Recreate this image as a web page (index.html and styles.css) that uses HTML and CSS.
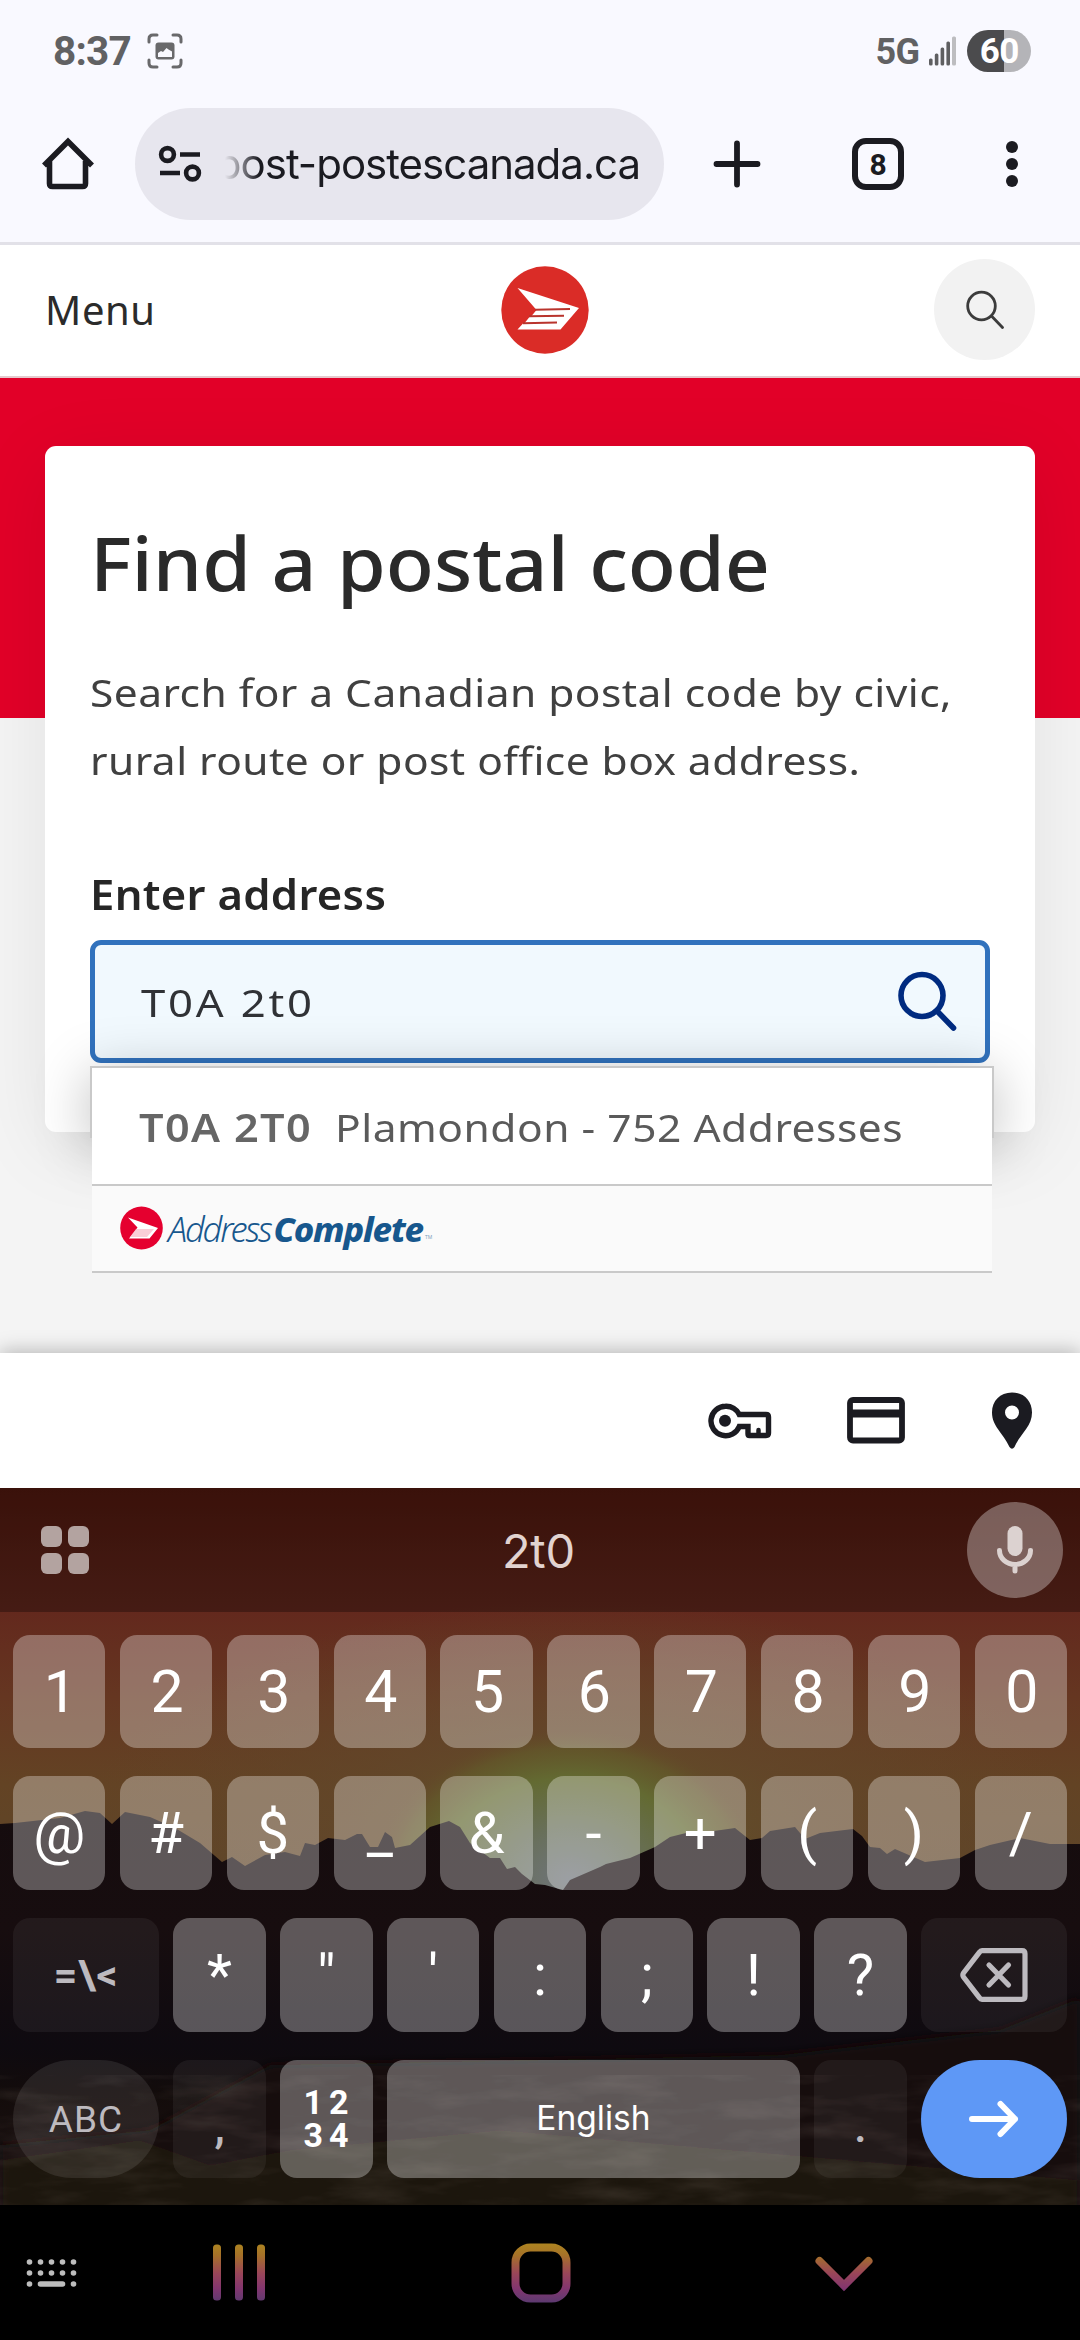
FILE: index.html
```html
<!DOCTYPE html>
<html lang="en">
<head>
<meta charset="utf-8">
<title>Find a postal code</title>
<link rel="stylesheet" href="styles.css">
</head>
<body>
<div class="status">
  <span class="clock">8:37</span>
  <svg class="shot" width="36" height="36" viewBox="0 0 36 36"><path d="M2 9V6q0-4 4-4h4M26 2h4q4 0 4 4v3M34 27v3q0 4-4 4h-4M10 34H6q-4 0-4-4v-3" fill="none" stroke="#69696b" stroke-width="3" stroke-linecap="round"/><rect x="8.500" y="9.500" width="19" height="17" rx="3" fill="#69696b"/><path d="M11 24v-4l3-2 2 1 3.500-4 2 1.500 3.500 2V24z" fill="#f9f9ff"/></svg>
  <span class="net">5G</span>
  <svg class="signal" width="28" height="30" viewBox="0 0 28 30"><g fill="#5f5f61"><rect x="0" y="22.500" width="3.600" height="7" rx="1.500"/><rect x="5.800" y="17.500" width="3.600" height="12" rx="1.500"/><rect x="11.600" y="11.500" width="3.600" height="18" rx="1.500"/><rect x="17.400" y="5.500" width="3.600" height="24" rx="1.500"/></g><rect x="23" y="0.500" width="4" height="29" rx="1.500" fill="#bdbdc0"/></svg>
  <span class="battery">60</span>
</div>
<div class="toolbar">
  <svg class="home" width="54" height="54" viewBox="0 0 54 54"><path d="M8.500 24v22.500q0 3 3 3h30q3 0 3-3V24M3 28.500 27 4.500l24 24" fill="none" stroke="#1b1b21" stroke-width="5.600"/></svg>
  <div class="pill">
    <svg width="44" height="38" viewBox="0 0 44 38"><g fill="none" stroke="#1b1b21" stroke-width="4.600"><circle cx="9.500" cy="9.500" r="6.400"/><circle cx="34.500" cy="28" r="6.400"/><path d="M22 9.500h20M2 28h20"/></g></svg>
    <div class="url"><span>post-postescanada.ca</span></div>
  </div>
  <svg class="plus" width="48" height="48" viewBox="0 0 48 48"><path d="M24 3.500v41M3.500 24h41" stroke="#1b1b21" stroke-width="5.800" stroke-linecap="round"/></svg>
  <span class="tabs">8</span>
  <svg class="dots" width="14" height="50" viewBox="0 0 14 50"><g fill="#1b1b21"><circle cx="7" cy="8" r="6"/><circle cx="7" cy="25" r="6"/><circle cx="7" cy="42" r="6"/></g></svg>
</div>
<header class="site">
  <span class="menu">Menu</span>
  <svg class="logo" width="88" height="88" viewBox="0 0 88 88"><circle cx="44" cy="44" r="43.700" fill="#da2c27"/><path d="M16.500 22 78 42 59.500 63.500H16.500L22 57.500h3l-1-1 4.500-5.500h3l-1-1 5-6z" fill="#fff"/><path d="M34 43.800 69 43M28 50.300 63 49.700M22 57.200 56 56.500" stroke="#b9342d" stroke-width="1.900"/></svg>
  <span class="find"><svg width="38" height="40" viewBox="0 0 38 40"><circle cx="15.500" cy="16" r="13.800" fill="none" stroke="#3c3c3c" stroke-width="2.800"/><path d="m25.500 26 11 11.500" stroke="#3c3c3c" stroke-width="2.800" stroke-linecap="round"/></svg></span>
</header>
<main class="hero">
  <section class="card">
    <h1>Find a postal code</h1>
    <p>Search for a Canadian postal code by civic,<br>rural route or post office box address.</p>
    <div class="label">Enter address</div>
    <div class="field">
      <span class="value">T0A 2t0</span>
      <svg width="62" height="62" viewBox="0 0 62 62"><circle cx="25" cy="24.500" r="21" fill="none" stroke="#002b80" stroke-width="5.600"/><path d="m41 41 15.500 16" stroke="#002b80" stroke-width="5.600" stroke-linecap="round"/></svg>
      <div class="drop">
        <div class="option"><b>T0A 2T0</b><span>Plamondon - 752 Addresses</span></div>
        <div class="brand">
          <svg width="43" height="44" viewBox="0 0 43 44"><ellipse cx="21.500" cy="22" rx="21.300" ry="21.500" fill="#e5002f"/><path d="m8 11.500 30 10.500L29.500 32.500H9l8.500-11z" fill="#fff"/><path d="M16 23h18l-7 8H10z" fill="#f7b9c6" opacity=".7"/></svg>
          <i>Address</i><em>Complete</em><small>TM</small>
        </div>
      </div>
    </div>
  </section>
</main>
<div class="fill">
  <svg width="64" height="36" viewBox="0 0 64 36"><path d="M17.500 3.300a14.700 14.700 0 1 0 13.800 20.200H40V31q0 1.500 1.500 1.500H58q2.500 0 2.500-2.500V14q0-2.500-2.500-2.500H31.300A14.700 14.700 0 0 0 17.500 3.300z" fill="none" stroke="#1b1b21" stroke-width="5.400"/><circle cx="17" cy="17.800" r="6" fill="#1b1b21"/><path d="M50.500 32v-5" stroke="#1b1b21" stroke-width="4.500" stroke-linecap="round"/></svg>
  <svg class="cc" width="58" height="47" viewBox="0 0 58 47"><rect x="3" y="3" width="52" height="40.500" rx="3" fill="none" stroke="#1b1b21" stroke-width="5.800"/><path d="M3 16.500h52" stroke="#1b1b21" stroke-width="8"/></svg>
  <svg class="pin" width="42" height="58" viewBox="0 0 42 58"><path d="M21 .5C9 .5 1 9 1 20.500c0 14 11 20 17.500 34.500q2.500 3.500 5 0C30 40.500 41 34.500 41 20.500 41 9 33 .5 21 .5zm0 13a7 7 0 1 1 0 14 7 7 0 0 1 0-14z" fill="#1b1b21"/></svg>
</div>
<section class="keyboard">
  <svg class="scene" width="1080" height="717" viewBox="0 1488 1080 717" preserveAspectRatio="none">
    <defs>
      <linearGradient id="sky" x1="0" y1="0" x2="0" y2="1"><stop offset="0" stop-color="#54190f"/><stop offset=".3" stop-color="#63281d"/><stop offset=".52" stop-color="#653621"/><stop offset=".74" stop-color="#634324"/><stop offset="1" stop-color="#5d462a"/></linearGradient>
      <radialGradient id="mid"><stop offset="0" stop-color="#63572a"/><stop offset=".45" stop-color="#62472a" stop-opacity=".75"/><stop offset="1" stop-color="#624428" stop-opacity="0"/></radialGradient>
      <radialGradient id="glow"><stop offset="0" stop-color="#6f747b"/><stop offset=".3" stop-color="#69705f"/><stop offset=".68" stop-color="#636a32"/><stop offset=".88" stop-color="#62592a" stop-opacity=".7"/><stop offset="1" stop-color="#624a28" stop-opacity="0"/></radialGradient>
      <linearGradient id="land" x1="0" y1="0" x2="0" y2="1"><stop offset="0" stop-color="#150c0e"/><stop offset=".3" stop-color="#170d0f"/><stop offset=".6" stop-color="#0e0a10"/><stop offset=".72" stop-color="#130c0b"/><stop offset="1" stop-color="#1d1213"/></linearGradient>
      <filter id="soft"><feGaussianBlur stdDeviation="5"/></filter>
      <filter id="grain" x="0" y="0" width="1" height="1"><feTurbulence type="fractalNoise" baseFrequency=".012 .05" numOctaves="4" seed="4"/><feColorMatrix values="0 0 0 0 .42  0 0 0 0 .33  0 0 0 0 .28  1.600 0 0 0 -.7"/></filter>
    </defs>
    <rect y="1488" width="1080" height="400" fill="url(#sky)"/>
    <ellipse cx="580" cy="1830" rx="500" ry="230" fill="url(#mid)"/>
    <ellipse cx="570" cy="1880" rx="195" ry="150" fill="url(#glow)"/>
    <path d="M0 1824 15 1823 60 1818 85 1811 100 1813 112 1824 125 1812 150 1817 175 1828 200 1843 222 1862 232 1857 245 1866 265 1855 285 1852 300 1856 305 1843 315 1845 328 1838 345 1840 357 1834 362 1834 370 1847 378 1847 385 1832 392 1837 395 1848 410 1845 430 1827 449 1821 460 1827 470 1843 490 1858 500 1858 507 1869 515 1867 522 1874 535 1884 545 1885 563 1890 570 1880 600 1867 606 1864 630 1858 655 1847 670 1837 690 1832 700 1833 735 1828 750 1840 762 1838 770 1831 795 1827 805 1839 820 1833 853 1829 862 1836 870 1847 880 1848 887 1854 895 1849 925 1862 960 1858 975 1850 990 1845 1020 1838 1050 1844 1080 1844V2205H0z" fill="url(#land)"/>
    <g filter="url(#soft)"><path d="M0 2145 150 2130 270 2065 540 2060 780 2055 1000 2030 1080 1998V2215H0z" fill="#150c07"/><path d="M0 2160 140 2140 210 2165 290 2150 500 2130 1080 2180V2215H0z" fill="#1e1211"/></g>
    <rect y="2075" width="1080" height="130" filter="url(#grain)" opacity=".18"/>
  </svg>
  <div class="strip">
    <svg class="apps" width="48" height="48" viewBox="0 0 48 48"><g fill="#b3a3a0"><rect width="21" height="21" rx="6"/><rect x="27" width="21" height="21" rx="6"/><rect y="27" width="21" height="21" rx="6"/><rect x="27" y="27" width="21" height="21" rx="6"/></g></svg>
    <span class="sugg">2t0</span>
    <span class="mic"><svg width="36" height="50" viewBox="0 0 36 50"><rect x="10.500" y="1" width="15" height="30" rx="7.500" fill="#dcd2d0"/><path d="M2.500 25.500a15.500 14 0 0 0 31 0M18 39.500V46" fill="none" stroke="#dcd2d0" stroke-width="5" stroke-linecap="round"/></svg></span>
  </div>
  <div class="keys">
    <div class="row r1"><kbd>1</kbd><kbd>2</kbd><kbd>3</kbd><kbd>4</kbd><kbd>5</kbd><kbd>6</kbd><kbd>7</kbd><kbd>8</kbd><kbd>9</kbd><kbd>0</kbd></div>
    <div class="row r2"><kbd>@</kbd><kbd>#</kbd><kbd>$</kbd><kbd>_</kbd><kbd>&amp;</kbd><kbd>-</kbd><kbd>+</kbd><kbd>(</kbd><kbd>)</kbd><kbd>/</kbd></div>
    <div class="row r3"><kbd class="dim sym">=\&lt;</kbd><kbd>*</kbd><kbd>"</kbd><kbd>'</kbd><kbd>:</kbd><kbd>;</kbd><kbd>!</kbd><kbd>?</kbd><kbd class="dim"><svg width="68" height="54" viewBox="0 0 68 54"><path d="M22 2.700h40q3 0 3 3v42.600q0 3-3 3H22q-1.500 0-2.500-1.500L3.500 29q-1.300-2 0-4L19.500 4.200q1-1.500 2.500-1.500z" fill="none" stroke="#bdbabf" stroke-width="5.200"/><path d="m29 17 19.500 20M48.500 17 29 37" stroke="#bdbabf" stroke-width="5.200" stroke-linecap="round"/></svg></kbd></div>
    <div class="row r4"><kbd class="dim abc">ABC</kbd><kbd class="dim punct">,</kbd><kbd class="num"><span>12</span><span>34</span></kbd><kbd class="space">English</kbd><kbd class="dim punct">.</kbd><kbd class="enter"><svg width="50" height="38" viewBox="0 0 50 38"><path d="M3 19h43M31.500 4 46 19 31.500 34" fill="none" stroke="#fff" stroke-width="6" stroke-linecap="round" stroke-linejoin="round"/></svg></kbd></div>
  </div>
</section>
<nav class="nav">
  <svg width="52" height="30" viewBox="0 0 52 30"><g fill="none" stroke="#bdbdbd" stroke-width="5.600" stroke-linecap="round"><path d="M3.500 4h.01M14.500 4h.01M25.500 4h.01M36.500 4h.01M47.500 4h.01M3.500 15h.01M14.500 15h.01M25.500 15h.01M36.500 15h.01M47.500 15h.01M3.500 26h.01M47.500 26h.01M14.500 26h22"/></g></svg>
  <svg class="recents" width="54" height="60" viewBox="0 0 54 60"><defs><linearGradient id="dusk" gradientUnits="userSpaceOnUse" x1="0" y1="0" x2="0" y2="60"><stop offset="0" stop-color="#ad8520"/><stop offset=".2" stop-color="#a67228"/><stop offset=".5" stop-color="#9a4658"/><stop offset=".75" stop-color="#83366f"/><stop offset="1" stop-color="#5b3a70"/></linearGradient></defs><g fill="url(#dusk)"><rect x="1" y="1.500" width="8" height="56" rx="3.500"/><rect x="23" y="1.500" width="8" height="56" rx="3.500"/><rect x="45" y="1.500" width="8" height="56" rx="3.500"/></g></svg>
  <svg class="homekey" width="60" height="60" viewBox="0 0 60 60"><rect x="4.500" y="4.500" width="51" height="51" rx="15" fill="none" stroke="url(#dusk)" stroke-width="8"/></svg>
  <svg class="down" width="58" height="60" viewBox="0 0 58 60"><path d="M4.500 18 29 42.500 53.500 18" fill="none" stroke="url(#dusk)" stroke-width="8" stroke-linecap="round"/></svg>
</nav>
</body>
</html>
```
FILE: styles.css
```css
*{box-sizing:border-box}
body{margin:0;width:1080px;height:2340px;overflow:hidden;background:#f3f3f3;font-family:"Noto Sans",sans-serif}
svg{display:block;flex:none}

.status{display:flex;align-items:center;height:102px;padding:0 49px 0 53px;background:#f9f9ff;font-family:Roboto,sans-serif;font-weight:700;color:#616163}
.clock{width:94px;font-size:40.500px;letter-spacing:-.8px}
.net{margin-left:693px;width:54px;font-size:36px;letter-spacing:-.7px;padding-top:2px}
.battery{margin-left:10px;width:64px;height:42px;border-radius:21px;background:linear-gradient(90deg,#4b4b4d 37px,#b4b4b8 37px);color:#fff;font-size:35px;line-height:43px;text-align:center;letter-spacing:-.6px}

.toolbar{display:flex;align-items:center;height:143px;padding:0 0 16px 41px;background:#f9f9ff;border-bottom:3px solid #e2e1e8}
.pill{display:flex;align-items:center;gap:23px;width:529px;height:112px;margin-left:40px;padding:0 24px 0 23px;border-radius:56px;background:#e7e6ee}
.url{display:flex;justify-content:flex-end;width:415px;overflow:hidden;white-space:nowrap;font:42px/60px Inter,sans-serif;letter-spacing:-1px;color:#1b1b21;-webkit-mask-image:linear-gradient(90deg,transparent,#000 34px);mask-image:linear-gradient(90deg,transparent,#000 34px)}
.plus{margin-left:49px}
.tabs{width:52px;height:52px;margin-left:91px;border:6px solid #1b1b21;border-radius:14px;font:700 30px/41px Roboto,sans-serif;text-align:center;color:#1b1b21}
.dots{margin-left:101px}

.site{display:flex;align-items:center;height:133px;padding:0 45px 2px 45px;background:#fff;border-bottom:2px solid #e5c9cd}
.menu{width:456px;font-size:40px;letter-spacing:.6px;color:#2b2b2b}
.find{display:flex;align-items:center;justify-content:center;width:101px;height:101px;margin-left:auto;border-radius:50%;background:#f2f2f2}

.hero{height:975px;padding:68px 45px 0;background:linear-gradient(#e20028 340px,#f4f4f4 340px)}
.card{height:686px;padding:71px 45px 0;border-radius:11px;background:#fff;box-shadow:0 16px 80px rgba(0,0,0,.08)}
h1,p,.label,.value,.option b,.option span{transform-origin:left center;white-space:nowrap}
h1{margin:0;font-size:75px;line-height:90px;font-weight:500;letter-spacing:0;color:#2a2a2a;transform:scaleX(1.05)}
p{margin:51px 0 76px;font-size:39px;line-height:67.700px;letter-spacing:.4px;color:#404040;transform:scaleX(1.09)}
.label{height:50px;font-size:41.500px;line-height:50px;font-weight:600;letter-spacing:.3px;color:#262626;transform:scaleX(1.05)}
.field{position:relative;display:flex;align-items:center;justify-content:space-between;width:900px;height:123px;margin-top:21px;padding:0 26px 0 46px;border:5px solid #3172bd;border-radius:11px;background:#f1f9fe}
.value{font-size:39px;letter-spacing:2.500px;color:#303236;transform:scaleX(1.12)}
.drop{position:absolute;left:-5px;top:121px;width:904px;height:72px;border:2px solid #c9c9c9;border-bottom:0;box-shadow:0 8px 55px rgba(0,0,0,.26)}
.option{display:flex;align-items:center;height:118px;padding-left:47px;background:#fff;border-bottom:2px solid #c9c9c9;font-size:39px}
.option b{width:196px;flex:none;font-size:40px;font-weight:600;letter-spacing:1.250px;color:#666;transform:scaleX(1.08)}
.option span{letter-spacing:.470px;color:#5a5a5a;transform:scaleX(1.09)}
.brand{display:flex;align-items:center;height:87px;padding:0 0 1px 28px;background:#fafafa;border-bottom:2px solid #c9c9c9;font-size:34.500px;color:#17578d}
.brand i{margin-left:5px;font-weight:300;letter-spacing:-2.200px}
.brand em{margin-left:3px;font-weight:800;letter-spacing:-1.200px}
.brand small{margin:18px 0 0 2px;font-size:5px;color:#7b9fbd}

.fill{position:relative;display:flex;align-items:center;height:135px;padding:0 47px 0 708px;background:#fff;box-shadow:0 -2px 18px rgba(0,0,0,.26)}
.cc{margin-left:75px}
.pin{margin-left:86px}

.keyboard{position:relative;height:717px;background:#170e10;overflow:hidden}
.scene{position:absolute;left:0;top:0}
.strip{position:relative;display:flex;align-items:center;height:124px;padding:0 17px 0 41px;background:rgba(0,0,0,.3)}
.sugg{margin-left:413px;font:47px Inter,sans-serif;letter-spacing:-.3px;color:#e2d3d0}
.mic{display:flex;align-items:center;justify-content:center;width:96px;height:96px;margin-left:auto;border-radius:50%;background:rgba(255,255,255,.32)}
.keys{position:relative;display:flex;flex-direction:column;gap:28px;padding:23px 13px}
.row{display:grid;gap:14.400px;height:114px;grid-template-columns:repeat(10,1fr)}
.r1{height:113px}
.r3{grid-template-columns:146px repeat(7,1fr) 146px}
.r4{height:118px;grid-template-columns:146px 92.500px 92.500px 1fr 92.500px 146px}
kbd{display:flex;align-items:center;justify-content:center;border-radius:17px;background:rgba(255,255,255,.31);color:#fff;font:58px/1 Roboto,sans-serif}
.r1 kbd{font-size:59px;padding-left:2px}
.dim{background:rgba(255,255,255,.055);color:#bdbabf}
.sym{font-size:41px;font-weight:700;letter-spacing:1px}
.abc{font-size:37px;letter-spacing:1px;border-radius:59px;background:rgba(255,255,255,.09)}
.punct{font-size:46px;font-weight:500;padding-top:14px}
.num{flex-direction:column;font-size:34px;font-weight:700;line-height:33.500px;letter-spacing:6px;padding-left:5px}
.space{font-size:33.500px;font-family:Inter,sans-serif}
.enter{border-radius:59px;background:#5e98f6}

.nav{display:flex;align-items:center;height:135px;padding:1px 0 0 26px;background:#000}
.recents{margin-left:134px}
.homekey{margin-left:245px}
.down{margin-left:244px}
```
